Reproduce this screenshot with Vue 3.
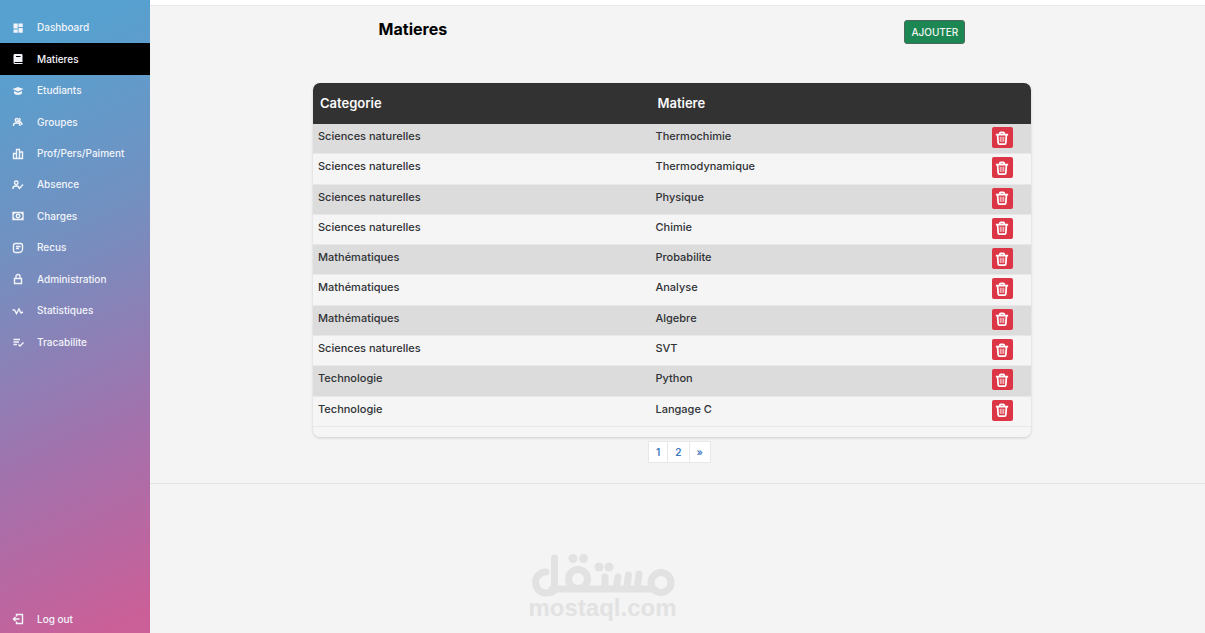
<script setup>
const menu = [
  { label: 'Dashboard', icon: 'dashboard' },
  { label: 'Matieres', icon: 'book', active: true },
  { label: 'Etudiants', icon: 'graduation' },
  { label: 'Groupes', icon: 'group' },
  { label: 'Prof/Pers/Paiment', icon: 'chart' },
  { label: 'Absence', icon: 'check' },
  { label: 'Charges', icon: 'money' },
  { label: 'Recus', icon: 'note' },
  { label: 'Administration', icon: 'lock' },
  { label: 'Statistiques', icon: 'pulse' },
  { label: 'Tracabilite', icon: 'edit' },
]

const fills = {
  dashboard: 'M3 13h8.500V3H3zM3 21.500h8.500V15H3zM13 21.500h8.500V12H13zM13 10h8.500V3H13z',
  book: 'M6 18h15V4a2 2 0 0 0-2-2H6C4.800 2 3 2.800 3 5v14c0 2.200 1.800 3 3 3h15v-2H6c-.5 0-1-.2-1-1s.5-1 1-1zM8 6h9v2H8V6z',
  graduation: 'M1 8l11-4 11 4-11 5zM4 12l8 3.500 8-3.500v4c0 2-4 4-8 4s-8-2-8-4z',
}

const strokes = {
  group: 'M9.500 5a3 3 0 1 1 0 6 3 3 0 0 1 0-6zM3 20v-1a5 5 0 0 1 5-5h3a5 5 0 0 1 5 5v1M14 4c3 2 3 5 0 7 4 1 6 4 6 7',
  chart: 'M3 11h6v10H3zM9 3h6v18H9zM15 8h6v13h-6z',
  check: 'M8.500 4a3.500 3.500 0 1 1 0 7 3.500 3.500 0 0 1 0-7zM2 20v-1a5 5 0 0 1 5-5h3a5 5 0 0 1 4 2M12 16l3 3 7-8',
  money: 'M2 5h20v14H2zM12 8.500a3.500 3.500 0 1 1 0 7 3.500 3.500 0 0 1 0-7zM2 9l4-4M18 5l4 4M2 15l4 4M18 19l4-4',
  note: 'M7 3h10a4 4 0 0 1 4 4v7a7 7 0 0 1-7 7H7a4 4 0 0 1-4-4V7a4 4 0 0 1 4-4zM8 9h9M8 13h6',
  lock: 'M5 11h14v10H5zM8 11V7a4 4 0 0 1 8 0v4',
  pulse: 'M1 10h4l4 7 5-9 4 8 4-2',
  edit: 'M3 7h13M3 12h11M3 17h7M13 17l3 3 7-7',
  logout: 'M9 7V3h12v18H9v-4M15 12H3M7 8l-4 4 4 4',
}

const rows = [
  ['Sciences naturelles', 'Thermochimie'],
  ['Sciences naturelles', 'Thermodynamique'],
  ['Sciences naturelles', 'Physique'],
  ['Sciences naturelles', 'Chimie'],
  ['Mathématiques', 'Probabilite'],
  ['Mathématiques', 'Analyse'],
  ['Mathématiques', 'Algebre'],
  ['Sciences naturelles', 'SVT'],
  ['Technologie', 'Python'],
  ['Technologie', 'Langage C'],
]
</script>

<template>
  <div class="app">
    <nav class="sidebar" aria-label="Menu principal">
      <div class="menu">
        <a v-for="m in menu" :key="m.label" href="#" :class="['link', { active: m.active }]">
          <svg class="icon" viewBox="0 0 24 24" aria-hidden="true">
            <path v-if="fills[m.icon]" class="fill" :d="fills[m.icon]" />
            <path v-else class="line" :d="strokes[m.icon]" />
          </svg>
          <span>{{ m.label }}</span>
        </a>
      </div>
      <a href="#" class="link logout">
        <svg class="icon" viewBox="0 0 24 24" aria-hidden="true"><path class="line" :d="strokes.logout" /></svg>
        <span>Log out</span>
      </a>
    </nav>

    <div class="page">
      <div class="topbar"></div>
      <main class="content">
        <header class="heading">
          <h1>Matieres</h1>
          <button type="button" class="add">AJOUTER</button>
        </header>

        <div class="card">
          <table>
            <thead>
              <tr>
                <th scope="col" class="wide">Categorie</th>
                <th scope="col" class="wide">Matiere</th>
                <td></td>
              </tr>
            </thead>
            <tbody>
              <tr v-for="r in rows" :key="r[1]">
                <td>{{ r[0] }}</td>
                <td>{{ r[1] }}</td>
                <td class="action">
                  <button type="button" class="trash" :aria-label="'Supprimer ' + r[1]">
                    <svg viewBox="0 0 16 16" aria-hidden="true">
                      <path d="M1 4h14M5.500 3.500V2.500a1 1 0 0 1 1-1h3a1 1 0 0 1 1 1v1M3 4.500l.6 9a1.500 1.500 0 0 0 1.500 1.500h5.800a1.500 1.500 0 0 0 1.500-1.500l.6-9" />
                      <path class="thin" d="M6 6.500v6M8 6.500v6M10 6.500v6" />
                    </svg>
                  </button>
                </td>
              </tr>
            </tbody>
          </table>
        </div>

        <nav class="pager" aria-label="Pagination">
          <a href="#">1</a>
          <a href="#">2</a>
          <a href="#" aria-label="Suivant">»</a>
        </nav>
      </main>

      <footer class="footer">
        <svg class="mark" viewBox="0 0 145 43" aria-hidden="true">
          <path class="script" d="M16 18A10.500 10.500 0 1 0 16 39C21 39 24.500 38 24.500 34V4M22 35H124M75 23V35M88 23L86 35M98.500 21L96.500 35M109 20L107 35" />
          <circle class="script" cx="48" cy="25" r="9.500" />
          <circle class="script" cx="131" cy="28.500" r="10" />
          <circle class="dot" cx="43" cy="4.500" r="4.500" />
          <circle class="dot" cx="53.500" cy="4.500" r="4.500" />
          <circle class="dot" cx="69" cy="13" r="4.500" />
          <circle class="dot" cx="79" cy="13" r="4.500" />
        </svg>
        <span class="domain">mostaql.com</span>
      </footer>
    </div>
  </div>
</template>

<style>
body {
  background: #f4f4f4;
}
</style>

<style scoped>
.app {
  display: flex;
  min-height: 100vh;
  font-family: Inter, "Noto Sans", sans-serif;
  font-size: 11px;
  font-weight: 500;
  line-height: 16px;
  color: #303236;
}
.sidebar {
  box-sizing: border-box;
  flex: 0 0 150px;
  display: flex;
  flex-direction: column;
  justify-content: space-between;
  padding-top: 12px;
  background: linear-gradient(155deg, #56a1d0 8%, #7191c1 36%, #a471ac 70%, #cb5f98 97%);
}
.menu {
  display: grid;
  grid-auto-rows: 1fr;
  height: 346px;
}
.link {
  display: flex;
  align-items: center;
  gap: 13px;
  padding-left: 12px;
  font-size: 10px;
  color: #f2f4fa;
  text-decoration: none;
}
.link span {
  padding-bottom: 1px;
}
.link.active {
  background: #000;
}
.logout {
  height: 28px;
}
.icon {
  flex: none;
  width: 12px;
  height: 12px;
}
.fill {
  fill: currentColor;
}
.line {
  fill: none;
  stroke: currentColor;
  stroke-width: 2.800;
}
.page {
  flex: 1;
  min-width: 0;
}
.topbar {
  height: 5px;
  background: #fff;
  border-bottom: 1px solid #e9e9e9;
}
.content {
  padding: 13px 11px 20px 0;
  border-bottom: 1px solid #e3e3e3;
}
.heading {
  display: flex;
  justify-content: space-around;
  align-items: flex-start;
}
h1 {
  margin: 0;
  font-size: 16px;
  line-height: 20px;
  font-weight: 700;
  color: #000;
}
.add {
  width: 61px;
  height: 24px;
  margin-top: 1px;
  padding: 0;
  border: 1px solid #49695a;
  border-radius: 3px;
  background: #1d8754;
  color: #f0f4f2;
  font: 500 10px/16px Inter, "Noto Sans", sans-serif;
}
.card {
  width: 69%;
  max-width: 718px;
  margin: 39px auto 0;
  padding-bottom: 10px;
  overflow: hidden;
  box-sizing: border-box;
  border-radius: 7px;
  background: #f5f5f5;
  box-shadow: 0 1px 3px rgba(0, 0, 0, 0.16);
}
table {
  width: 100%;
  height: 344px;
  border-collapse: collapse;
  table-layout: fixed;
}
th, thead td {
  height: 40px;
  padding: 0 7px 1px;
  background: #323232;
  color: #fafafa;
  font-size: 13px;
  font-weight: 600;
  text-align: left;
}
.wide {
  box-sizing: border-box;
  width: 47%;
}
tbody td {
  padding: 3px 5px;
  vertical-align: top;
  line-height: 18px;
}
tbody tr {
  border-bottom: 1px solid #e8e8e8;
}
tbody tr:nth-child(odd) {
  background: #dcdcdc;
}
tbody .action {
  padding: 3px 0 3px 4px;
}
.trash {
  display: flex;
  align-items: center;
  justify-content: center;
  width: 21px;
  height: 21px;
  padding: 0;
  border: 0;
  border-radius: 2px;
  background: #dc3546;
}
.trash svg {
  width: 14px;
  height: 14px;
  fill: none;
  stroke: #fff;
  stroke-width: 2;
}
.trash .thin {
  stroke-width: 0.900;
}
.pager {
  display: flex;
  justify-content: center;
  margin-top: 4px;
  padding-left: 15px;
}
.pager a {
  padding: 2px 7px;
  border: 1px solid #e6e8ea;
  background: #fff;
  color: #3c78bd;
  font-size: 10px;
  font-weight: 600;
  text-decoration: none;
}
.pager a + a {
  border-left: 0;
}
.footer {
  display: flex;
  flex-direction: column;
  align-items: center;
  width: 145px;
  margin: 70px 0 0 380px;
  color: #e2e2e2;
}
.mark {
  width: 145px;
  height: 43px;
  overflow: visible;
}
.script {
  fill: none;
  stroke: currentColor;
  stroke-width: 7;
  stroke-linecap: round;
  stroke-linejoin: round;
}
.dot {
  fill: currentColor;
}
.domain {
  font: 700 24px/22px "Liberation Sans", Arial, sans-serif;
}
</style>
